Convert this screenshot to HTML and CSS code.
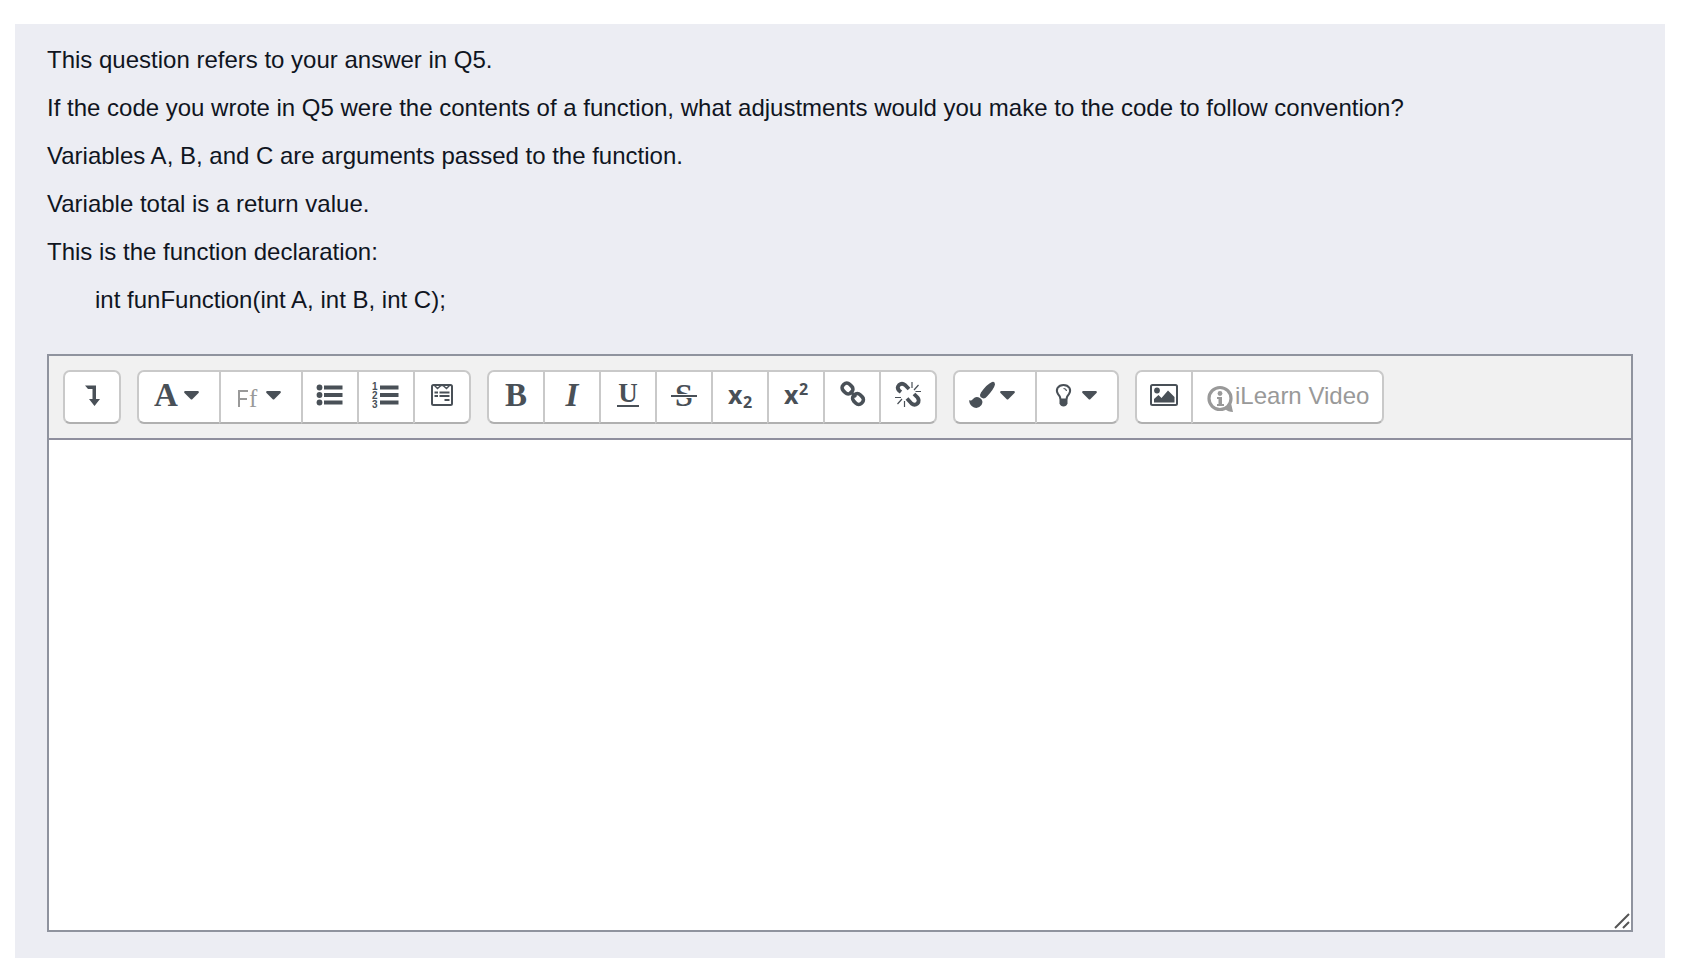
FILE: index.html
```html
<!DOCTYPE html>
<html lang="en">
<head>
    <meta charset="utf-8">
    <title>Question 6</title>
    <link rel="stylesheet" href="styles.css">
</head>
<body>

<div class="question">
    <!-- Question text -->
    <div class="question-text" id="questionText">
        <p>This question refers to your answer in Q5.</p>
        <p>If the code you wrote in Q5 were the contents of a function, what adjustments would you make to the code to follow convention?</p>
        <p>Variables A, B, and C are arguments passed to the function.</p>
        <p>Variable total is a return value.</p>
        <p>This is the function declaration:</p>
        <p class="indent">int funFunction(int A, int B, int C);</p>
    </div>

    <!-- Answer editor -->
    <div class="editor">
        <div class="toolbar">
            <div class="group">
                <button type="button" class="tool" aria-label="Show more buttons">
                    <svg class="icon" viewBox="0 0 28 28"><path d="M7 4.500H18V18H22L16.500 25 11 18H14.500V8H10Z"/></svg>
                </button>
            </div>

            <div class="group">
                <button type="button" class="tool wide" aria-label="Paragraph styles">
                    <svg class="icon" viewBox="0 0 28 28"><text class="serif bold" x="14" y="25" font-size="33" text-anchor="middle">A</text></svg>
                    <svg class="caret" viewBox="0 0 15 9"><path d="M1 0H14Q15.500 .5 14.500 2L8.500 8Q7.500 9 6.500 8L.5 2Q-.5 .5 1 0Z"/></svg>
                </button>
                <button type="button" class="tool wide" aria-label="Font family">
                    <svg class="icon muted" viewBox="0 0 28 28"><path d="M4 26V9H14V11H6V17H13V19H6V26Z"/><text class="serif" x="15" y="26" font-size="25">f</text></svg>
                    <svg class="caret" viewBox="0 0 15 9"><path d="M1 0H14Q15.500 .5 14.500 2L8.500 8Q7.500 9 6.500 8L.5 2Q-.5 .5 1 0Z"/></svg>
                </button>
                <button type="button" class="tool" aria-label="Unordered list">
                    <svg class="icon" viewBox="0 0 28 28"><circle cx="3.500" cy="6.500" r="2.900"/><circle cx="3.500" cy="14" r="2.900"/><circle cx="3.500" cy="21.500" r="2.900"/><path d="M8 4.500H26.500V8.500H8ZM8 12H26.500V16H8ZM8 19.500H26.500V23.500H8Z"/></svg>
                </button>
                <button type="button" class="tool" aria-label="Ordered list">
                    <svg class="icon" viewBox="0 0 28 28"><g class="number bold" font-size="10"><text x="0" y="8.500">1</text><text x="0" y="17.500">2</text><text x="0" y="26.500">3</text></g><path d="M8 4.500H26.500V8.500H8ZM8 12H26.500V16H8ZM8 19.500H26.500V23.500H8Z"/></svg>
                </button>
                <button type="button" class="tool" aria-label="Templates">
                    <svg class="icon line" viewBox="0 0 28 28"><rect x="4" y="4" width="20" height="20" rx="1.500" stroke-width="2"/><path stroke-width="1.400" d="M6 4L9.500 7.500 13 4.500H15L18.500 7.500 22 4"/><path stroke-width="1.800" d="M6.500 11.500H10M11.500 11.500H21.500M6.500 15H10M11.500 15H21.500M16.500 19H21.500"/></svg>
                </button>
            </div>

            <div class="group">
                <button type="button" class="tool" aria-label="Bold">
                    <svg class="icon" viewBox="0 0 28 28"><text class="serif bold" x="14" y="25" font-size="33" text-anchor="middle">B</text></svg>
                </button>
                <button type="button" class="tool" aria-label="Italic">
                    <svg class="icon" viewBox="0 0 28 28"><text class="serif bold italic" x="14" y="25" font-size="33" text-anchor="middle">I</text></svg>
                </button>
                <button type="button" class="tool" aria-label="Underline">
                    <svg class="icon" viewBox="0 0 28 28"><text class="serif bold" x="14" y="21" font-size="27" text-anchor="middle">U</text><path d="M3 24H25V26H3Z"/></svg>
                </button>
                <button type="button" class="tool" aria-label="Strikethrough">
                    <svg class="icon" viewBox="0 0 28 28"><text class="serif bold" x="14" y="25" font-size="32" text-anchor="middle">S</text><path class="cut" d="M1 13H27V17H1Z"/><path d="M1 14H27V16H1Z"/></svg>
                </button>
                <button type="button" class="tool" aria-label="Subscript">
                    <svg class="icon" viewBox="0 0 28 28"><text class="sans bold" x="2" y="23" font-size="25">x</text><text class="sans bold" x="17" y="27" font-size="16">2</text></svg>
                </button>
                <button type="button" class="tool" aria-label="Superscript">
                    <svg class="icon" viewBox="0 0 28 28"><text class="sans bold" x="2" y="23" font-size="25">x</text><text class="sans bold" x="17" y="14" font-size="16">2</text></svg>
                </button>
                <button type="button" class="tool" aria-label="Link">
                    <svg class="icon line" viewBox="0 0 28 28"><rect x="4" y="3" width="11" height="9" rx="4" stroke-width="3.600" transform="rotate(45 9.500 7.500)"/><rect x="14.500" y="13.500" width="11" height="9" rx="4" stroke-width="3.600" transform="rotate(45 20 18)"/><path stroke-width="3" d="M12 10L18 16"/></svg>
                </button>
                <button type="button" class="tool" aria-label="Unlink">
                    <svg class="icon line" viewBox="0 0 28 28"><path stroke-width="3.800" d="M7 11L5 9.500Q2.500 6.500 5 4 8 1.500 11 4L15 8M13 17.500L17.500 22.500Q20.500 25 23.500 22.500 26 19.500 23.500 16.500L20 13"/><path stroke-width="1.200" d="M18 1V7M20 9L24.500 4M21.500 10.500H27M1 16.500H7M3.500 23L8 18M10.500 20V26"/></svg>
                </button>
            </div>

            <div class="group">
                <button type="button" class="tool wide" aria-label="Font colour">
                    <svg class="icon" viewBox="0 0 28 28"><path d="M24 1Q27 0 27 3.500 26 8 19 15.500 16 19 12.500 16 11.500 13.500 13 11.500 19 3 24 1ZM1 19Q3 20.500 5 18 8 14.500 12 17 16 20 13.500 24 10.500 28 6 26.500 1.500 24.500 1 19Z"/></svg>
                    <svg class="caret" viewBox="0 0 15 9"><path d="M1 0H14Q15.500 .5 14.500 2L8.500 8Q7.500 9 6.500 8L.5 2Q-.5 .5 1 0Z"/></svg>
                </button>
                <button type="button" class="tool wide" aria-label="Background colour">
                    <svg class="icon" viewBox="0 0 28 28"><path class="line" stroke-width="2" d="M10.500 18Q10 15 8 13 6 10 7.500 7 9.500 4 13.500 4 17.500 4 19.500 7 21 10 19 13 17 15 16.500 18"/><path class="line" stroke-width="1.200" d="M13.500 7.500Q16 7.500 16.500 10"/><path d="M9.500 17.500H17.500V22.500Q16.500 25.500 13.500 25.500 10.500 25.500 9.500 22.500Z"/></svg>
                    <svg class="caret" viewBox="0 0 15 9"><path d="M1 0H14Q15.500 .5 14.500 2L8.500 8Q7.500 9 6.500 8L.5 2Q-.5 .5 1 0Z"/></svg>
                </button>
            </div>

            <div class="group">
                <button type="button" class="tool" aria-label="Image">
                    <svg class="icon" viewBox="0 0 28 28"><rect class="line" x="1" y="4" width="26" height="20" rx="1.500" stroke-width="2"/><circle cx="7" cy="9.500" r="2.900"/><path d="M4 21.500V18L8.500 14 11.500 17 18 9.500 24.500 16V21.500Z"/></svg>
                </button>
                <button type="button" class="tool video">
                    <svg class="icon video-icon" viewBox="0 0 28 28"><circle class="line" cx="14" cy="13.500" r="11" stroke-width="3.200"/><path d="M21 22L25 18 27 27Q22 27 19 24ZM11 12H16V19H18V21H11V19H12.500V14H11Z"/><circle cx="14" cy="8.500" r="2.400"/></svg>
                    <span>iLearn Video</span>
                </button>
            </div>
        </div>

        <div class="answer">
            <textarea id="answerText" aria-labelledby="questionText"></textarea>
            <svg class="grip" viewBox="0 0 16 16"><path d="M1 15L15 1M9 15L15 9"/></svg>
        </div>
    </div>
</div>

</body>
</html>
```

FILE: styles.css
```css
body {
    margin: 24px 18px 18px 15px;
    font-family: "Helvetica Neue", "Liberation Sans", Arial, sans-serif;
    font-size: 24px;
    line-height: 24px;
    color: #10151f;
    background-color: #fff;
}

.question {
    padding: 24px 32px 26px;
    background-color: #ecedf3;
}

.question-text {
    margin-bottom: 42px;
}

.question-text p {
    margin: 0 0 24px;
}

.question-text .indent {
    margin: 0;
    padding-left: 48px;
}

.editor {
    border: 2px solid #8f939e;
    background-color: #fff;
}

.toolbar {
    display: flex;
    flex-wrap: wrap;
    gap: 16px;
    padding: 14px;
    border-bottom: 2px solid #8f8f9e;
    background-color: #f1f1f1;
}

.group {
    display: flex;
}

.tool {
    display: flex;
    align-items: center;
    justify-content: center;
    gap: 4px;
    box-sizing: border-box;
    width: 58px;
    height: 54px;
    margin: 0;
    padding: 0 0 4px;
    border: 2px solid #c9c9c9;
    border-bottom-color: #b0b0b0;
    background-color: #fff;
    color: #495057;
    cursor: pointer;
}

/* Neighbouring buttons share one border */
.tool + .tool {
    margin-left: -2px;
}

.tool:first-child {
    border-top-left-radius: 7px;
    border-bottom-left-radius: 7px;
}

.tool:last-child {
    border-top-right-radius: 7px;
    border-bottom-right-radius: 7px;
}

.tool:hover {
    background-color: #e6e6e6;
}

.wide {
    width: 84px;
    padding-right: 8px;
}

.video {
    width: auto;
    padding: 0 13px 2px;
    gap: 1px;
    font-family: inherit;
    font-size: 24px;
    line-height: 24px;
    color: #999;
}

.icon {
    width: 28px;
    height: 28px;
    flex: none;
    fill: currentColor;
    overflow: visible;
}

.video-icon {
    margin-top: 6px;
}

.caret {
    width: 15px;
    height: 9px;
    flex: none;
    fill: currentColor;
}

.muted {
    color: #999;
}

.line {
    fill: none;
    stroke: currentColor;
}

.cut {
    fill: #fff;
}

.serif {
    font-family: "Liberation Serif", "Times New Roman", serif;
}

.sans {
    font-family: "Noto Sans", "Open Sans", sans-serif;
}

.number {
    font-family: "Liberation Sans", Arial, sans-serif;
}

.bold {
    font-weight: bold;
}

.italic {
    font-style: italic;
}

.answer {
    position: relative;
}

.answer textarea {
    display: block;
    box-sizing: border-box;
    width: 100%;
    height: 490px;
    padding: 8px;
    border: none;
    outline: none;
    resize: none;
    font: inherit;
    background-color: #fff;
}

/* Resize handle in the corner of the answer box */
.grip {
    position: absolute;
    right: 1px;
    bottom: 1px;
    width: 16px;
    height: 16px;
    fill: none;
    stroke: #555;
    stroke-width: 2px;
}
```
